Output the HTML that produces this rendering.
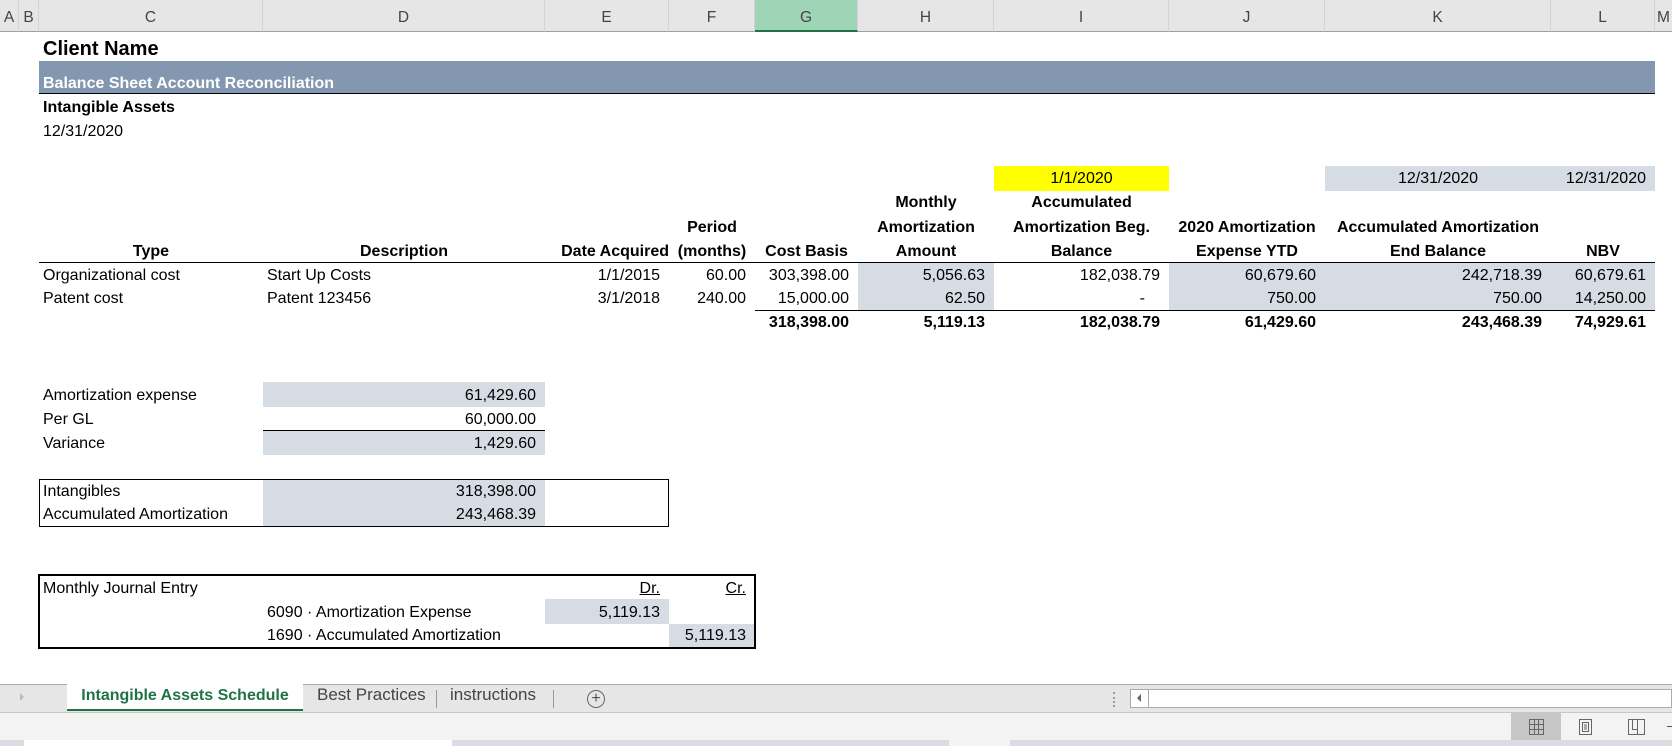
<!DOCTYPE html>
<html><head><meta charset="utf-8"><style>
*{margin:0;padding:0;box-sizing:border-box}
body{width:1672px;height:746px;overflow:hidden;background:#fff;font-family:"Liberation Sans",sans-serif;color:#000;position:relative}
.a{position:absolute}
.c{position:absolute;height:24px;line-height:24px;font-size:16px;white-space:nowrap;padding:0 4px}
.r{text-align:right;padding-right:9px}
.m{text-align:center}
.b{font-weight:bold}
.g{background:#d6dce4}
.h{position:absolute;top:0;height:32px;line-height:35px;font-size:15.5px;color:#444;text-align:center;border-right:1px solid #d4d4d4;background:#e6e6e6;border-bottom:1px solid #a0a0a0}
</style></head><body>
<div class="h" style="left:0;width:19px">A</div>
<div class="h" style="left:19px;width:20px">B</div>
<div class="h" style="left:39px;width:224px">C</div>
<div class="h" style="left:263px;width:282px">D</div>
<div class="h" style="left:545px;width:124px">E</div>
<div class="h" style="left:669px;width:86px">F</div>
<div class="h" style="left:755px;width:103px;background:#9fd5b7;border-bottom:2px solid #217346">G</div>
<div class="h" style="left:858px;width:136px">H</div>
<div class="h" style="left:994px;width:175px">I</div>
<div class="h" style="left:1169px;width:156px">J</div>
<div class="h" style="left:1325px;width:226px">K</div>
<div class="h" style="left:1551px;width:104px">L</div>
<div class="h" style="left:1655px;width:30px;text-align:left;padding-left:2px">M</div>

<div class="c b" style="left:39px;top:35px;height:28px;line-height:28px;font-size:20px">Client Name</div>
<div class="a" style="left:39px;top:61px;width:1616px;height:33px;background:#8497b0;border-bottom:1px solid #000"></div>
<div class="c b" style="left:39px;top:72px;color:#fff">Balance Sheet Account Reconciliation</div>
<div class="c b" style="left:39px;top:96px">Intangible Assets</div>
<div class="c" style="left:39px;top:120px">12/31/2020</div>

<div class="c m" style="left:994px;top:166px;width:175px;height:25px;line-height:26px;background:#ffff00">1/1/2020</div>
<div class="c m g" style="left:1325px;top:166px;width:226px;height:25px;line-height:26px">12/31/2020</div>
<div class="c r g" style="left:1551px;top:166px;width:104px;height:25px;line-height:26px">12/31/2020</div>

<div class="c m b" style="left:858px;top:191px;width:136px">Monthly</div>
<div class="c m b" style="left:994px;top:191px;width:175px">Accumulated</div>
<div class="c m b" style="left:669px;top:216px;width:86px">Period</div>
<div class="c m b" style="left:858px;top:216px;width:136px">Amortization</div>
<div class="c m b" style="left:994px;top:216px;width:175px">Amortization Beg.</div>
<div class="c m b" style="left:1169px;top:216px;width:156px">2020 Amortization</div>
<div class="c m b" style="left:1325px;top:216px;width:226px">Accumulated Amortization</div>
<div class="c m b" style="left:39px;top:240px;width:224px">Type</div>
<div class="c m b" style="left:263px;top:240px;width:282px">Description</div>
<div class="c b" style="left:545px;top:240px;width:124px;text-align:right;padding-right:0;overflow:visible;direction:rtl">Date Acquired</div>
<div class="c m b" style="left:669px;top:240px;width:86px;padding:0">(months)</div>
<div class="c m b" style="left:755px;top:240px;width:103px;padding:0">Cost Basis</div>
<div class="c m b" style="left:858px;top:240px;width:136px">Amount</div>
<div class="c m b" style="left:994px;top:240px;width:175px">Balance</div>
<div class="c m b" style="left:1169px;top:240px;width:156px">Expense YTD</div>
<div class="c m b" style="left:1325px;top:240px;width:226px">End Balance</div>
<div class="c m b" style="left:1551px;top:240px;width:104px">NBV</div>
<div class="a" style="left:39px;top:262px;width:1616px;height:1px;background:#000"></div>

<div class="a g" style="left:858px;top:263px;width:136px;height:47px"></div>
<div class="a g" style="left:1169px;top:263px;width:486px;height:47px"></div>

<div class="c" style="left:39px;top:264px">Organizational cost</div>
<div class="c" style="left:263px;top:264px">Start Up Costs</div>
<div class="c r" style="left:545px;top:264px;width:124px">1/1/2015</div>
<div class="c r" style="left:669px;top:264px;width:86px">60.00</div>
<div class="c r" style="left:755px;top:264px;width:103px">303,398.00</div>
<div class="c r" style="left:858px;top:264px;width:136px">5,056.63</div>
<div class="c r" style="left:994px;top:264px;width:175px">182,038.79</div>
<div class="c r" style="left:1169px;top:264px;width:156px">60,679.60</div>
<div class="c r" style="left:1325px;top:264px;width:226px">242,718.39</div>
<div class="c r" style="left:1551px;top:264px;width:104px">60,679.61</div>

<div class="c" style="left:39px;top:287px">Patent cost</div>
<div class="c" style="left:263px;top:287px">Patent 123456</div>
<div class="c r" style="left:545px;top:287px;width:124px">3/1/2018</div>
<div class="c r" style="left:669px;top:287px;width:86px">240.00</div>
<div class="c r" style="left:755px;top:287px;width:103px">15,000.00</div>
<div class="c r" style="left:858px;top:287px;width:136px">62.50</div>
<div class="c r" style="left:994px;top:287px;width:175px;padding-right:24px">-</div>
<div class="c r" style="left:1169px;top:287px;width:156px">750.00</div>
<div class="c r" style="left:1325px;top:287px;width:226px">750.00</div>
<div class="c r" style="left:1551px;top:287px;width:104px">14,250.00</div>
<div class="a" style="left:755px;top:310px;width:900px;height:1px;background:#000"></div>

<div class="c r b" style="left:755px;top:311px;width:103px">318,398.00</div>
<div class="c r b" style="left:858px;top:311px;width:136px">5,119.13</div>
<div class="c r b" style="left:994px;top:311px;width:175px">182,038.79</div>
<div class="c r b" style="left:1169px;top:311px;width:156px">61,429.60</div>
<div class="c r b" style="left:1325px;top:311px;width:226px">243,468.39</div>
<div class="c r b" style="left:1551px;top:311px;width:104px">74,929.61</div>

<div class="a g" style="left:263px;top:382px;width:282px;height:25px"></div>
<div class="a g" style="left:263px;top:430px;width:282px;height:25px"></div>
<div class="a" style="left:263px;top:430px;width:282px;height:1px;background:#000"></div>
<div class="c" style="left:39px;top:384px">Amortization expense</div>
<div class="c r" style="left:263px;top:384px;width:282px">61,429.60</div>
<div class="c" style="left:39px;top:408px">Per GL</div>
<div class="c r" style="left:263px;top:408px;width:282px">60,000.00</div>
<div class="c" style="left:39px;top:432px">Variance</div>
<div class="c r" style="left:263px;top:432px;width:282px">1,429.60</div>

<div class="a" style="left:39px;top:479px;width:630px;height:48px;border:1px solid #000"></div>
<div class="a g" style="left:263px;top:480px;width:282px;height:46px"></div>
<div class="c" style="left:39px;top:480px">Intangibles</div>
<div class="c r" style="left:263px;top:480px;width:282px">318,398.00</div>
<div class="c" style="left:39px;top:503px">Accumulated Amortization</div>
<div class="c r" style="left:263px;top:503px;width:282px">243,468.39</div>

<div class="a" style="left:38px;top:574px;width:718px;height:75px;border:2px solid #000"></div>
<div class="a g" style="left:545px;top:599px;width:124px;height:25px"></div>
<div class="a g" style="left:669px;top:624px;width:85px;height:23px"></div>
<div class="c" style="left:39px;top:577px">Monthly Journal Entry</div>
<div class="c r" style="left:545px;top:577px;width:124px;text-decoration:underline">Dr.</div>
<div class="c r" style="left:669px;top:577px;width:86px;text-decoration:underline">Cr.</div>
<div class="c" style="left:263px;top:601px">6090 · Amortization Expense</div>
<div class="c r" style="left:545px;top:601px;width:124px">5,119.13</div>
<div class="c" style="left:263px;top:624px">1690 · Accumulated Amortization</div>
<div class="c r" style="left:669px;top:624px;width:86px">5,119.13</div>

<div class="a" style="left:0;top:684px;width:1672px;height:29px;background:#e6e6e6;border-top:1px solid #a8a8a8;border-bottom:1px solid #c8c8c8"></div>
<div class="a" style="left:20px;top:693px;width:0;height:0;border-left:4px solid #bbb;border-top:4px solid transparent;border-bottom:4px solid transparent"></div>
<div class="a" style="left:67px;top:684px;width:236px;height:27px;background:#fff;border-bottom:2px solid #217346"></div>
<div class="c b" style="left:67px;top:684px;width:236px;text-align:center;color:#217346;font-size:16px;padding:0">Intangible Assets Schedule</div>
<div class="c" style="left:313px;top:683px;color:#444;font-size:17px">Best Practices</div>
<div class="a" style="left:436px;top:690px;width:1px;height:18px;background:#999"></div>
<div class="c" style="left:446px;top:683px;color:#444;font-size:17px">instructions</div>
<div class="a" style="left:553px;top:690px;width:1px;height:18px;background:#999"></div>
<div class="a" style="left:587px;top:690px;width:18px;height:18px;border:1px solid #666;border-radius:50%;text-align:center;line-height:15px;font-size:16px;color:#555">+</div>
<div class="a" style="left:1113px;top:692px;width:2px;height:15px;border-left:2px dotted #999"></div>
<div class="a" style="left:1130px;top:689px;width:542px;height:19px;background:#fff;border:1px solid #aaa"></div>
<div class="a" style="left:1148px;top:689px;width:1px;height:19px;background:#aaa"></div>
<div class="a" style="left:1137px;top:694px;width:0;height:0;border-right:4px solid #666;border-top:4px solid transparent;border-bottom:4px solid transparent"></div>

<div class="a" style="left:0;top:713px;width:1672px;height:33px;background:#f3f3f3"></div>
<div class="a" style="left:0;top:740px;width:1672px;height:6px;background:#dcdce4"></div>
<div class="a" style="left:24px;top:740px;width:428px;height:6px;background:#fff"></div>
<div class="a" style="left:949px;top:740px;width:61px;height:6px;background:#f3f3f3"></div>
<div class="a" style="left:1511px;top:713px;width:50px;height:27px;background:#c6c6c6"></div>
<svg class="a" style="left:1526px;top:718px" width="20" height="18" viewBox="0 0 20 18" fill="none" stroke="#666" stroke-width="1"><rect x="3.5" y="1.5" width="14" height="15"/><path d="M8.5 1.5v15M12.5 1.5v15M3.5 6.5h14M3.5 11.5h14"/></svg>
<svg class="a" style="left:1575px;top:718px" width="20" height="18" viewBox="0 0 20 18" fill="none" stroke="#666" stroke-width="1"><rect x="4.5" y="1.5" width="12" height="15"/><rect x="7.5" y="4.5" width="6" height="9"/><path d="M9 7h3M9 9h3M9 11h3"/></svg>
<svg class="a" style="left:1625px;top:718px" width="20" height="18" viewBox="0 0 20 18" fill="none" stroke="#666" stroke-width="1"><rect x="3.5" y="1.5" width="16" height="15"/><path d="M7.5 1.5v10h5v-10M12.5 11.5v5"/></svg>
<div class="a" style="left:1667px;top:726px;width:5px;height:1px;background:#555"></div>
</body></html>
